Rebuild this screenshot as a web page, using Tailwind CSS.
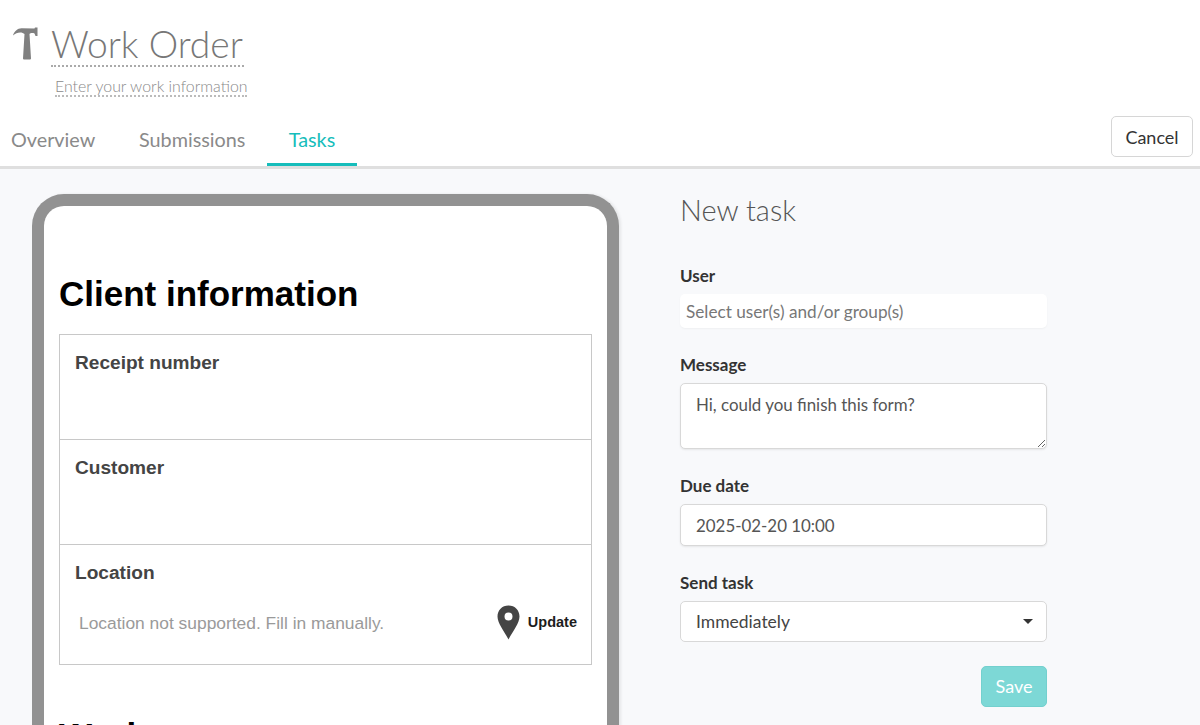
<!DOCTYPE html>
<html lang="en">
  <head>
    <meta charset="UTF-8" />
    <title>Work Order</title>
    <script src="https://cdn.jsdelivr.net/npm/@tailwindcss/browser@4"></script>
  </head>
  <body class="bg-[#f8f9fb] font-['Lato',sans-serif] text-[#333]">
    <div class="h-[725px] w-[1200px] overflow-hidden flex flex-col">
      <!-- Header -->
      <header class="h-[169px] shrink-0 bg-white border-b-[3px] border-[#dfdfdf] flex flex-col">
        <div class="flex items-start pt-[27px] pl-[13px] h-[127px] shrink-0">
          <svg class="w-[25px] h-[34px] shrink-0" viewBox="0 0 25 34">
            <path d="M0 8.500C1 4.500 4.500 1.200 8.500 1.200L21.500 1.500L22 0.500H24.500V9H22.500L21.500 6.500C20 5.800 17.500 5.800 16.500 7L18 31.500Q18 32.500 17 32.500H11Q10 32.500 10 31.500L11.500 7C9 4.500 3.500 5 0 8.500Z" fill="#808080" />
          </svg>
          <div class="ml-[13px] flex flex-col items-start">
            <h1 class="text-[37.200px] leading-[33px] font-light text-[#777] border-b-2 border-dotted border-[#aaa] w-[193px] h-[40px] whitespace-nowrap">Work Order</h1>
            <p class="ml-[4px] mt-[9px] text-[15.900px] leading-[19px] font-light text-[#8a8a8a] border-b-2 border-dotted border-[#bbb] w-[192px] h-[21px] whitespace-nowrap">Enter your work information</p>
          </div>
        </div>
        <div class="flex-1 flex justify-between items-start">
          <nav class="flex text-[19.800px] leading-[24px] text-[#8a8a8a] pl-[11px]">
            <a class="h-[39px] w-[106px]">Overview</a>
            <a class="h-[39px] w-[150px] pl-[22px]">Submissions</a>
            <a class="h-[39px] w-[90px] text-center text-[#16bdbb] border-b-[3px] border-[#16bdbb]">Tasks</a>
          </nav>
          <button class="mt-[-11px] mr-[7px] w-[82px] h-[41px] pt-[1px] bg-white border border-[#d6d6d6] rounded-[5px] text-[18px] text-[#333]">Cancel</button>
        </div>
      </header>

      <main class="flex-1 flex items-start min-h-0">
        <!-- Form preview -->
        <div class="ml-[32px] mt-[25px] w-[587px] h-[700px] shrink-0 bg-white border-[12px] border-b-0 border-[#929292] rounded-t-[32px] px-[15px] font-['Liberation_Sans',sans-serif] shadow-[2px_0_3px_rgba(0,0,0,0.08)]">
          <h2 class="mt-[66px] text-[35px] leading-[44px] font-bold text-black">Client information</h2>
          <div class="mt-[18px] w-[533px] border border-[#c8c8c8]">
            <div class="h-[105px] border-b border-[#c8c8c8] px-[15px] pt-[16px] text-[19.100px] leading-[24px] font-bold text-[#444]">Receipt number</div>
            <div class="h-[105px] border-b border-[#c8c8c8] px-[15px] pt-[16px] text-[19.100px] leading-[24px] font-bold text-[#444]">Customer</div>
            <div class="h-[119px] px-[15px] pt-[16px]">
              <div class="text-[19.100px] leading-[24px] font-bold text-[#444]">Location</div>
              <div class="mt-[20px] flex items-center justify-between">
                <span class="ml-[4px] mt-[2px] text-[17.400px] text-[#9a9a9a]">Location not supported. Fill in manually.</span>
                <span class="flex items-center">
                  <svg class="w-[23px] h-[35px]" viewBox="0 0 23 35">
                    <path fill-rule="evenodd" d="M11.500 0.500C5 0.500 0.500 5.300 0.500 11.500C0.500 18 7 26 11.500 34.500C16 26 22.500 18 22.500 11.500C22.500 5.300 18 0.500 11.500 0.500ZM11.500 7.500A4 4 0 1 1 11.500 15.500A4 4 0 1 1 11.500 7.500Z" fill="#444" />
                  </svg>
                  <span class="ml-[8px] mr-[-1px] text-[14.500px] font-bold text-[#1c1c1c]">Update</span>
                </span>
              </div>
            </div>
          </div>
          <h2 class="mt-[49px] text-[35px] leading-[44px] font-bold text-black">Work</h2>
        </div>

        <!-- New task form -->
        <section class="ml-[61px] w-[367px] shrink-0">
          <h2 class="mt-[21px] text-[29px] leading-[40px] font-light text-[#555]">New task</h2>
          <label class="block mt-[35px] text-[17px] leading-[22px] font-bold text-[#333]">User</label>
          <input class="block mt-[7px] w-full h-[34px] px-[6px] bg-white rounded-[5px] text-[17.200px] text-[#777] placeholder:text-[#777] shadow-[0_1px_2px_rgba(0,0,0,0.04)] outline-none" placeholder="Select user(s) and/or group(s)" />
          <label class="block mt-[26px] text-[17px] leading-[22px] font-bold text-[#333]">Message</label>
          <textarea class="block mt-[7px] w-full h-[66px] px-[15px] py-[9px] bg-white border border-[#d8d8d8] rounded-[5px] text-[16.900px] leading-[24px] text-[#555] shadow-[0_1px_2px_rgba(0,0,0,0.08)] outline-none">Hi, could you finish this form?</textarea>
          <label class="block mt-[26px] text-[17px] leading-[22px] font-bold text-[#333]">Due date</label>
          <input class="block mt-[7px] w-full h-[42px] px-[15px] bg-white border border-[#d8d8d8] rounded-[5px] text-[16.900px] text-[#555] shadow-[0_1px_2px_rgba(0,0,0,0.08)] outline-none" value="2025-02-20 10:00" />
          <label class="block mt-[26px] text-[17px] leading-[22px] font-bold text-[#333]">Send task</label>
          <div class="relative mt-[7px] w-full h-[41px] px-[15px] pt-[1px] flex items-center bg-white border border-[#d8d8d8] rounded-[5px] text-[17.500px] text-[#444]">
            Immediately
            <span class="absolute right-[13px] top-[17px] w-0 h-0 border-x-[5px] border-x-transparent border-t-[5px] border-t-[#333]"></span>
          </div>
          <div class="flex justify-end mt-[24px]">
            <button class="w-[66px] h-[41px] bg-[#7dd8d6] border border-[#73d0ce] rounded-[5px] text-[18px] text-white">Save</button>
          </div>
        </section>
      </main>
    </div>
  </body>
</html>
